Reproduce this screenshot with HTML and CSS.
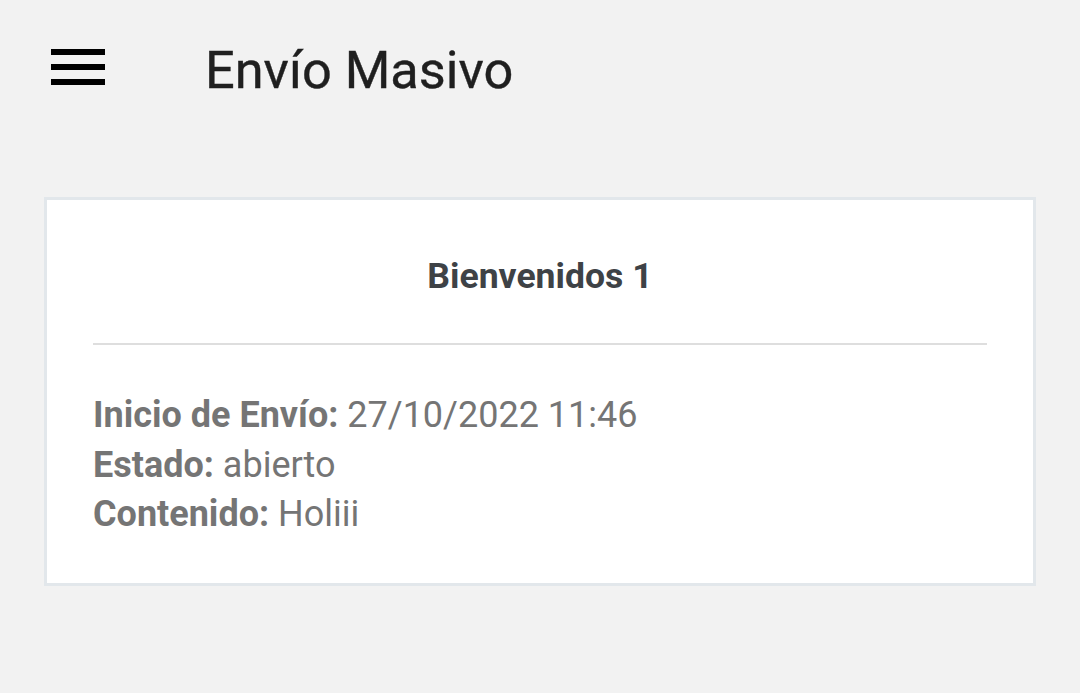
FILE: index.html
```html
<!DOCTYPE html>
<html lang="es">
<head>
<meta charset="utf-8">
<title>Envío Masivo</title>
<link rel="stylesheet" href="styles.css">
</head>
<body>
<header class="topbar">
  <div class="menu" aria-label="Menú">
    <span class="bar"></span>
    <span class="bar"></span>
    <span class="bar"></span>
  </div>
  <h1 class="title">Envío Masivo</h1>
</header>
<main class="content">
  <section class="card">
    <h2 class="card-title">Bienvenidos 1</h2>
    <hr class="divider">
    <div class="details">
      <p class="row"><b>Inicio de Envío:</b> 27/10/2022 11:46</p>
      <p class="row"><b>Estado:</b> abierto</p>
      <p class="row"><b>Contenido:</b> Holiii</p>
    </div>
  </section>
</main>
</body>
</html>
```
FILE: styles.css
```css
html, body {
  margin: 0;
  padding: 0;
}
body {
  background: #f2f2f2;
  font-family: Roboto, "Liberation Sans", sans-serif;
  width: 1080px;
  height: 693px;
  overflow: hidden;
}
.topbar {
  display: flex;
  align-items: center;
  padding: 36px 0 0 51px;
  height: 64px;
}
.menu {
  display: flex;
  flex-direction: column;
  gap: 9px;
  width: 54px;
  margin-top: -2px;
}
.bar {
  display: block;
  height: 6px;
  background: #000;
}
.title {
  margin: 0 0 0 100px;
  font-size: 52.3px;
  font-weight: 400;
  line-height: 62px;
  color: #1f1f1f;
  position: relative;
  top: 2px;
  -webkit-text-stroke: 0.4px #1f1f1f;
}
.content {
  padding: 97px 44px 0 44px;
}
.card {
  background: #fff;
  border: 3px solid #e2e7eb;
  padding: 56px 46px 43px 46px;
}
.card-title {
  margin: 0;
  text-align: center;
  font-size: 35.6px;
  font-weight: 700;
  line-height: 40px;
  color: #3e4246;
}
.divider {
  border: 0;
  height: 2px;
  background: #dedede;
  margin: 47px 0 46px 0;
}
.details {
  color: #757575;
  font-size: 36px;
  line-height: 49.5px;
}
.row {
  margin: 0;
}
.row b {
  font-weight: 700;
}
```
